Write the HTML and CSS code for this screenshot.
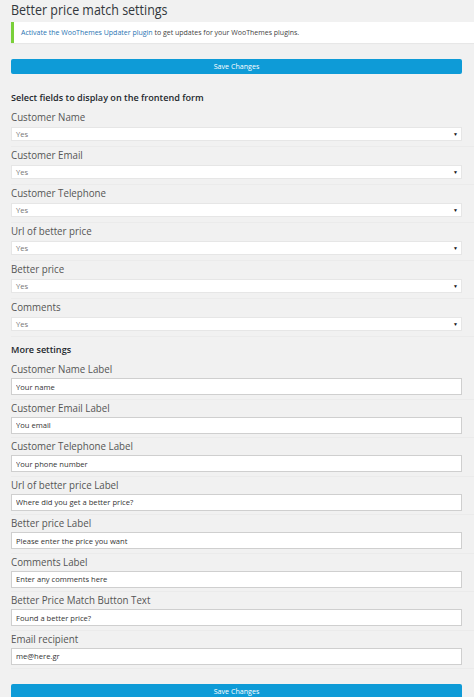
FILE: index.html
```html
<!DOCTYPE html>
<html>
<head>
<meta charset="utf-8">
<link rel="stylesheet" href="styles.css">
</head>
<body>
<div class="wrap">
  <h1 class="title"><span>Better price match settings</span></h1>
  <div class="notice"><a href="#">Activate the WooThemes Updater plugin</a> to get updates for your WooThemes plugins.</div>
  <button class="btn first">Save Changes</button>

  <h3 class="section">Select fields to display on the frontend form</h3>
  <div class="sfield"><div class="label"><span>Customer Name</span></div><div class="select"><span>Yes</span><span class="arrow">▼</span></div></div>
  <div class="sfield"><div class="label"><span>Customer Email</span></div><div class="select"><span>Yes</span><span class="arrow">▼</span></div></div>
  <div class="sfield"><div class="label"><span>Customer Telephone</span></div><div class="select"><span>Yes</span><span class="arrow">▼</span></div></div>
  <div class="sfield"><div class="label"><span>Url of better price</span></div><div class="select"><span>Yes</span><span class="arrow">▼</span></div></div>
  <div class="sfield"><div class="label"><span>Better price</span></div><div class="select"><span>Yes</span><span class="arrow">▼</span></div></div>
  <div class="sfield"><div class="label"><span>Comments</span></div><div class="select"><span>Yes</span><span class="arrow">▼</span></div></div>

  <h3 class="section more">More settings</h3>
  <div class="tfield"><div class="label"><span>Customer Name Label</span></div><input class="text" type="text" value="Your name"></div>
  <div class="tfield"><div class="label"><span>Customer Email Label</span></div><input class="text" type="text" value="You email"></div>
  <div class="tfield"><div class="label"><span>Customer Telephone Label</span></div><input class="text" type="text" value="Your phone number"></div>
  <div class="tfield"><div class="label"><span>Url of better price Label</span></div><input class="text" type="text" value="Where did you get a better price?"></div>
  <div class="tfield"><div class="label"><span>Better price Label</span></div><input class="text" type="text" value="Please enter the price you want"></div>
  <div class="tfield"><div class="label"><span>Comments Label</span></div><input class="text" type="text" value="Enter any comments here"></div>
  <div class="tfield"><div class="label"><span>Better Price Match Button Text</span></div><input class="text" type="text" value="Found a better price?"></div>
  <div class="tfield"><div class="label"><span>Email recipient</span></div><input class="text" type="text" value="me@here.gr"></div>

  <button class="btn last">Save Changes</button>
</div>
</body>
</html>
```

FILE: styles.css
```css
html, body {
  margin: 0;
  padding: 0;
  background: #f1f1f1;
  font-family: "Open Sans", "Noto Sans", sans-serif;
  overflow: hidden;
}
.wrap {
  padding: 0 0 0 11px;
}
.title {
  margin: 0;
  font-size: 14.5px;
  line-height: 20px;
  font-weight: 400;
  color: #32373c;
}
.title span {
  display: inline-block;
  transform: scaleX(0.86);
  transform-origin: left center;
  white-space: nowrap;
}
.notice {
  margin-top: 2px;
  height: 21px;
  box-sizing: border-box;
  background: #fff;
  border-left: 3px solid #7ad03a;
  padding-left: 7px;
  font-size: 7px;
  line-height: 21px;
  color: #444;
  box-shadow: 0 1px 1px rgba(0,0,0,0.04);
}
.notice a {
  color: #2a75b3;
  text-decoration: none;
}
.btn {
  display: block;
  width: calc(100% - 12px);
  height: 15px;
  padding: 0;
  border: 0;
  border-radius: 2px;
  background: #0e9bd7;
  color: #fff;
  font-family: "Open Sans", "Noto Sans", sans-serif;
  font-size: 7.1px;
  line-height: 15px;
  text-align: center;
}
.btn.first {
  margin-top: 16px;
}
.btn.last {
  margin-top: 15px;
}
.section {
  margin: 17px 0 4px;
  font-size: 9.1px;
  line-height: 14px;
  font-weight: 600;
  color: #23282d;
}
.section.more {
  margin-top: 6px;
  margin-bottom: 4px;
}
.label {
  font-size: 11.4px;
  line-height: 16px;
  color: #555;
}
.label span {
  display: inline-block;
  transform: scaleX(0.855);
  transform-origin: left center;
  white-space: nowrap;
}
.sfield {
  padding-bottom: 5px;
  border-bottom: 1px solid #ebebeb;
}
.sfield .label {
  margin-bottom: 2px;
}
.select {
  width: calc(100% - 12px);
  height: 14px;
  box-sizing: border-box;
  background: #fff;
  border: 1px solid #e6e6e6;
  display: flex;
  align-items: center;
  justify-content: space-between;
  padding: 0 3px 0 4px;
  font-size: 7.6px;
  color: #777;
}
.arrow {
  font-size: 5px;
  color: #111;
}
.tfield {
  padding-bottom: 3.5px;
  border-bottom: 1px solid #ebebeb;
}
.tfield .label {
  margin-bottom: 1px;
}
.text {
  display: block;
  width: calc(100% - 12px);
  height: 17px;
  box-sizing: border-box;
  margin: 0;
  background: #fff;
  border: 1px solid #cfcfcf;
  padding: 0 0 0 4px;
  font-family: "Open Sans", "Noto Sans", sans-serif;
  font-size: 7.6px;
  color: #333;
  outline: none;
}
```
